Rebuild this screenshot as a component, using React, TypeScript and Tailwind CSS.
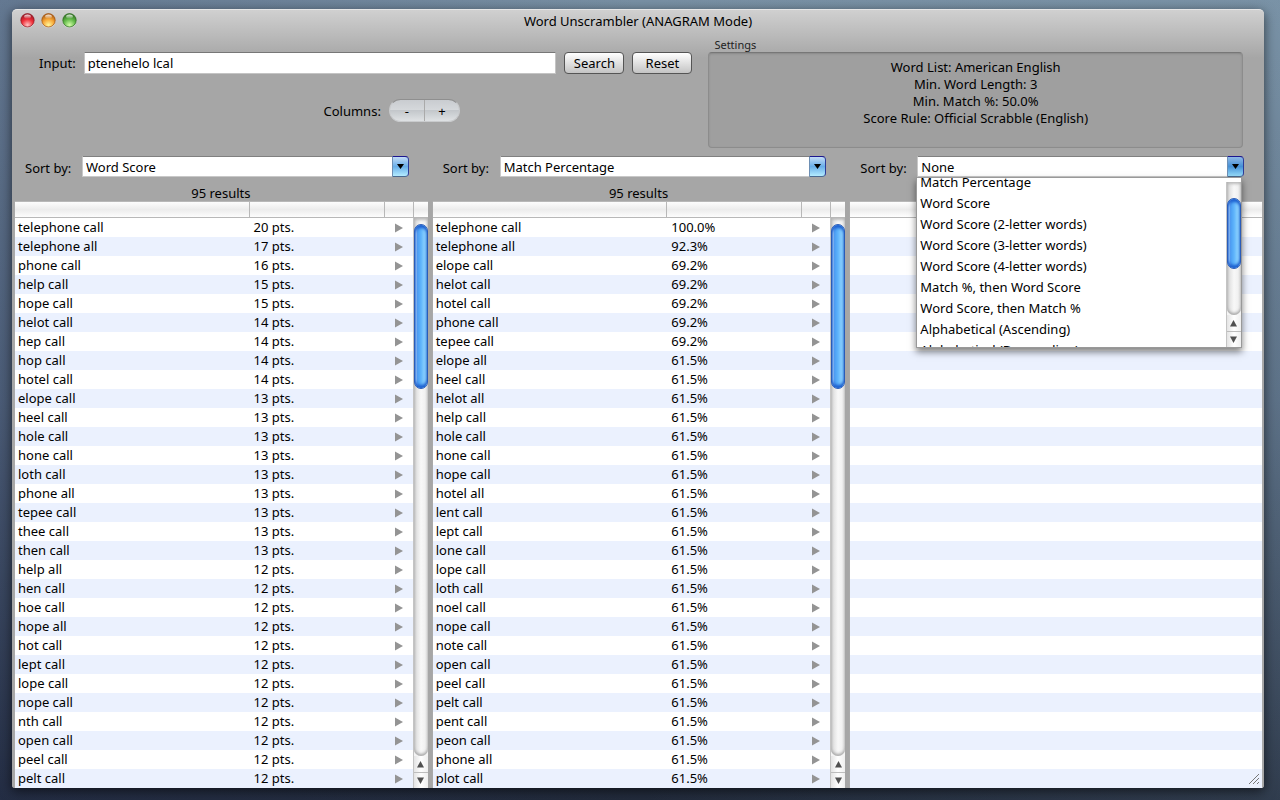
import { useState } from 'react';
import clsx from 'clsx';

const SORT_OPTIONS = [
  'None',
  'Match Percentage',
  'Word Score',
  'Word Score (2-letter words)',
  'Word Score (3-letter words)',
  'Word Score (4-letter words)',
  'Match %, then Word Score',
  'Word Score, then Match %',
  'Alphabetical (Ascending)',
  'Alphabetical (Descending)',
];

const TOTAL_RESULTS = 95;

const byScore: [string, number][] = [
  ['telephone call', 20],
  ['telephone all', 17],
  ['phone call', 16],
  ['help call', 15],
  ['hope call', 15],
  ['helot call', 14],
  ['hep call', 14],
  ['hop call', 14],
  ['hotel call', 14],
  ['elope call', 13],
  ['heel call', 13],
  ['hole call', 13],
  ['hone call', 13],
  ['loth call', 13],
  ['phone all', 13],
  ['tepee call', 13],
  ['thee call', 13],
  ['then call', 13],
  ['help all', 12],
  ['hen call', 12],
  ['hoe call', 12],
  ['hope all', 12],
  ['hot call', 12],
  ['lept call', 12],
  ['lope call', 12],
  ['nope call', 12],
  ['nth call', 12],
  ['open call', 12],
  ['peel call', 12],
  ['pelt call', 12],
];

const byMatch: [string, number][] = [
  ['telephone call', 100],
  ['telephone all', 92.3],
  ['elope call', 69.2],
  ['helot call', 69.2],
  ['hotel call', 69.2],
  ['phone call', 69.2],
  ['tepee call', 69.2],
  ['elope all', 61.5],
  ['heel call', 61.5],
  ['helot all', 61.5],
  ['help call', 61.5],
  ['hole call', 61.5],
  ['hone call', 61.5],
  ['hope call', 61.5],
  ['hotel all', 61.5],
  ['lent call', 61.5],
  ['lept call', 61.5],
  ['lone call', 61.5],
  ['lope call', 61.5],
  ['loth call', 61.5],
  ['noel call', 61.5],
  ['nope call', 61.5],
  ['note call', 61.5],
  ['open call', 61.5],
  ['peel call', 61.5],
  ['pelt call', 61.5],
  ['pent call', 61.5],
  ['peon call', 61.5],
  ['phone all', 61.5],
  ['plot call', 61.5],
];

type Row = { word: string; value: string };

const scoreRows: Row[] = byScore.map(([word, n]) => ({ word, value: `${n} pts.` }));
const matchRows: Row[] = byMatch.map(([word, n]) => ({ word, value: `${n.toFixed(1)}%` }));

type LightProps = { id: string; label: string; rim: string; mid: string; glow: string };

function TrafficLight({ id, label, rim, mid, glow }: LightProps) {
  return (
    <button type="button" aria-label={label} className="size-[15px]">
      <svg viewBox="0 0 15 15" className="block size-full">
        <defs>
          <radialGradient id={id} cx="0.5" cy="0.85" r="0.85">
            <stop offset="0" stopColor={glow} />
            <stop offset="0.5" stopColor={mid} />
            <stop offset="1" stopColor={rim} />
          </radialGradient>
          <linearGradient id={`${id}-shine`} x1="0" y1="0" x2="0" y2="1">
            <stop offset="0" stopColor="#fff" stopOpacity="0.9" />
            <stop offset="1" stopColor="#fff" stopOpacity="0.1" />
          </linearGradient>
        </defs>
        <circle cx="7.5" cy="8" r="7" fill="#fff" opacity="0.4" />
        <circle cx="7.5" cy="7.3" r="6.7" fill={`url(#${id})`} stroke={rim} strokeWidth="0.7" />
        <ellipse cx="7.5" cy="3.4" rx="3.4" ry="2" fill={`url(#${id}-shine)`} />
      </svg>
    </button>
  );
}

function StepArrow({ down = false }: { down?: boolean }) {
  return (
    <button
      type="button"
      aria-label={down ? 'Scroll down' : 'Scroll up'}
      className={clsx(
        'flex h-4 shrink-0 items-center justify-center bg-linear-to-r from-[#e4e4e4] via-white to-[#efefef]',
        down && 'border-t border-[#bdbdbd]'
      )}
    >
      <svg viewBox="0 0 7 7" className="size-[7px] fill-[#505050]">
        <path d={down ? 'M0 0.5h7L3.5 7z' : 'M0 6.5h7L3.5 0z'} />
      </svg>
    </button>
  );
}

type ScrollbarProps = { before: number; size: number; after: number };

function Scrollbar({ before, size, after }: ScrollbarProps) {
  return (
    <div className="flex w-[15px] flex-1 flex-col border-l border-[#c4c4c4] bg-[#f4f4f4]">
      <div className="flex flex-1 flex-col rounded-b-full bg-linear-to-r from-[#d6d6d6] via-[#f8f8f8] to-[#ececec] shadow-[inset_0_-2px_3px_#aaa,inset_0_2px_3px_#bbb]">
        <div style={{ flexGrow: before }} />
        <div
          className="rounded-full border border-[#2a5cb8] bg-linear-to-r from-[#3c8cec] via-[#5fb4fb] to-[#a4e4ff] shadow-[inset_0_3px_3px_#1c60d0,inset_0_-3px_3px_#1c60d0,inset_2px_0_1px_#a9d0fa]"
          style={{ flexGrow: size }}
        />
        <div style={{ flexGrow: after }} />
      </div>
      <StepArrow />
      <StepArrow down />
    </div>
  );
}

type SortFieldProps = {
  id: string;
  value: string;
  open?: boolean;
  onChange: (value: string) => void;
};

function SortField({ id, value, open = false, onChange }: SortFieldProps) {
  return (
    <div className="flex items-center gap-2 pr-[19px] pl-[11px]">
      <label htmlFor={id} className="w-[49px] shrink-0 pt-[2px]">
        Sort by:
      </label>
      <div className="relative flex-1">
        <select
          id={id}
          value={value}
          onChange={(e) => onChange(e.target.value)}
          className="block h-[21px] w-full appearance-none rounded-r-[4px] border border-[#c8c8c8] border-t-[#808080] bg-white pt-[2px] pl-[3px] leading-[17px] outline-none"
        >
          {SORT_OPTIONS.map((option) => (
            <option key={option}>{option}</option>
          ))}
        </select>
        <span
          className={clsx(
            'pointer-events-none absolute top-0 right-0 flex h-[21px] w-[17px] items-center justify-center rounded-r-[4px] border border-t-[#1c1690] border-r-[#2c3c98] border-b-[#4a6a90] border-l-[#6d8fb4] bg-linear-to-b',
            open
              ? 'from-[#8fb9e6] via-[#4590d6] to-[#96dcfa]'
              : 'from-[#c3dcf6] via-[#68aee9] to-[#b4ecff]'
          )}
        >
          <svg viewBox="0 0 7 5" className="h-[5px] w-[7px] fill-black">
            <path d="M0 0h7L3.5 5z" />
          </svg>
        </span>
        {open && (
          <div className="absolute top-full right-[2px] -left-px z-10 flex h-[171px] border border-[#999] bg-white shadow-[0_4px_7px_rgba(0,0,0,0.5)]">
            <ul role="listbox" aria-label="Sort by" className="flex-1 overflow-hidden pt-px">
              {SORT_OPTIONS.slice(1).map((option, i) => (
                <li
                  key={option}
                  role="option"
                  aria-selected={option === value}
                  className={clsx('h-[21px] pl-[3px] leading-[21px]', i === 0 && '-mt-[7px]')}
                >
                  {option}
                </li>
              ))}
            </ul>
            <div className="flex pt-1">
              <Scrollbar before={16} size={70} after={46} />
            </div>
          </div>
        )}
      </div>
    </div>
  );
}

function ResultsTable({ rows, label }: { rows: Row[]; label: string }) {
  return (
    <div className="flex flex-1 border-l border-[#a9a9a9] bg-white">
      <table
        aria-label={label}
        className="flex-1 table-fixed border-separate border-spacing-0 self-start"
      >
        <colgroup>
          <col className="w-[59%]" />
          <col className="w-[34%]" />
          <col className="w-[7%]" />
        </colgroup>
        <thead>
          <tr className="h-[17px] bg-linear-to-b from-white via-[#ececec] to-white">
            <th className="border-y border-r border-[#b8b8b8] p-0" />
            <th className="border-y border-r border-[#b8b8b8] p-0" />
            <th className="border-y border-[#b8b8b8] p-0" />
          </tr>
        </thead>
        <tbody>
          {rows.map((row) => (
            <tr key={row.word} className="h-[19px] even:bg-[#ebf1fe]">
              <td className="p-0 pl-[3px] leading-[19px]">{row.word}</td>
              <td className="p-0 pl-1 leading-[19px]">{row.value}</td>
              <td className="p-0">
                <svg viewBox="0 0 8 10" className="ml-[10px] h-[10px] w-2 fill-[#949494]">
                  <path d="M0 0.5L8 5L0 9.5z" />
                </svg>
              </td>
            </tr>
          ))}
        </tbody>
      </table>
      <div className="flex flex-col">
        <div className="h-[17px] border-y border-l border-[#b8b8b8] bg-linear-to-b from-white via-[#ececec] to-white" />
        <Scrollbar before={1} size={rows.length - 1} after={TOTAL_RESULTS - rows.length} />
      </div>
    </div>
  );
}

function EmptyTable() {
  return (
    <div className="relative flex flex-1 flex-col border-x border-[#a9a9a9]">
      <div className="h-[17px] border-y border-[#b8b8b8] bg-linear-to-b from-white via-[#ececec] to-white" />
      <div className="flex-1 bg-[repeating-linear-gradient(#ffffff_0_19px,#ebf1fe_19px_38px)]" />
      <svg
        viewBox="0 0 12 12"
        className="absolute right-[2px] bottom-[3px] size-3 fill-none stroke-[#777]"
      >
        <path d="M1 11L11 1M5 11L11 5M9 11L11 9" />
      </svg>
    </div>
  );
}

const buttonClass =
  'h-[22px] w-[60px] rounded-[4px] border border-[#555] bg-linear-to-b from-white to-[#c4c4c4]';

export default function App() {
  const [input, setInput] = useState('ptenehelo lcal');
  const [sorts, setSorts] = useState(['Word Score', 'Match Percentage', 'None']);

  const setSort = (index: number) => (value: string) =>
    setSorts(sorts.map((s, i) => (i === index ? value : s)));

  return (
    <div className="flex min-h-screen flex-col bg-[linear-gradient(to_right,rgba(40,50,90,0.25),transparent_50%,rgba(130,160,180,0.15)),linear-gradient(#7890a4,#56697f_50%,#222b3c)] pt-[9px] pr-4 pb-3 pl-3 font-['Lucida_Grande','Noto_Sans',sans-serif] text-[13px] leading-4 text-black">
      <main className="flex flex-1 flex-col rounded-t-[5px] rounded-b-[3px] border-t border-[#e6e6e6] bg-[#a6a6a6] bg-[linear-gradient(#d0d0d0,#a6a6a6_48px)] shadow-[0_3px_12px_rgba(0,0,0,0.6)]">
        <header className="grid h-[21px] grid-cols-[1fr_auto_1fr] items-center px-2">
          <div className="flex gap-[6px]">
            <TrafficLight id="close" label="Close" rim="#8e1420" mid="#f0303a" glow="#ffc4c4" />
            <TrafficLight id="minimize" label="Minimize" rim="#a0500c" mid="#f8a838" glow="#fff79a" />
            <TrafficLight id="zoom" label="Zoom" rim="#2a6a1c" mid="#66bc4c" glow="#d4ffa8" />
          </div>
          <h1>Word Unscrambler (ANAGRAM Mode)</h1>
        </header>

        <div className="grid grid-cols-[11fr_9fr] gap-4 pt-[7px] pr-[21px] pl-[27px]">
          <form className="pt-[14px]" onSubmit={(e) => e.preventDefault()}>
            <div className="flex items-center gap-2">
              <label htmlFor="letters">Input:</label>
              <input
                id="letters"
                type="text"
                value={input}
                onChange={(e) => setInput(e.target.value)}
                className="h-[22px] min-w-0 flex-1 border border-[#c4c4c4] border-t-[#777] bg-white px-[3px] outline-none"
              />
              <button type="submit" className={buttonClass}>
                Search
              </button>
              <button type="button" className={buttonClass} onClick={() => setInput('')}>
                Reset
              </button>
            </div>
            <div className="mt-[25px] flex items-center justify-center gap-2 pl-[52px]">
              <span>Columns:</span>
              <div className="flex h-[23px] w-[71px] overflow-hidden rounded-full border border-[#c9cbcd] border-t-[#8f8f8f] bg-[linear-gradient(#c9ccd0,#d6d9dc_50%,#c3c7cb_50%,#dfe2e4)]">
                <button
                  type="button"
                  aria-label="Fewer columns"
                  className="flex-1 border-r border-[#aaa]"
                >
                  -
                </button>
                <button type="button" aria-label="More columns" className="flex-1">
                  +
                </button>
              </div>
            </div>
          </form>

          <section aria-labelledby="settings">
            <h2 id="settings" className="pl-[6px] text-[11px] leading-[14px] text-[#222]">
              Settings
            </h2>
            <div className="h-24 rounded-[4px] border border-[#8c8c8c] border-t-[#777] bg-[#9f9f9f] pt-[6px] text-center leading-[17px] shadow-[inset_0_1px_2px_#888]">
              <p>Word List: American English</p>
              <p>Min. Word Length: 3</p>
              <p>Min. Match %: 50.0%</p>
              <p>Score Rule: Official Scrabble (English)</p>
            </div>
          </section>
        </div>

        <div className="grid flex-1 grid-cols-3 gap-1 pt-2 pr-px pl-[2px]">
          <section className="flex flex-col">
            <SortField id="sort-1" value={sorts[0]} onChange={setSort(0)} />
            <p className="pt-2 text-center">{TOTAL_RESULTS} results</p>
            <ResultsTable rows={scoreRows} label="Results by word score" />
          </section>
          <section className="flex flex-col">
            <SortField id="sort-2" value={sorts[1]} onChange={setSort(1)} />
            <p className="pt-2 text-center">{TOTAL_RESULTS} results</p>
            <ResultsTable rows={matchRows} label="Results by match percentage" />
          </section>
          <section className="flex flex-col">
            <SortField id="sort-3" value={sorts[2]} onChange={setSort(2)} open />
            <p className="h-6" />
            <EmptyTable />
          </section>
        </div>
      </main>
    </div>
  );
}
